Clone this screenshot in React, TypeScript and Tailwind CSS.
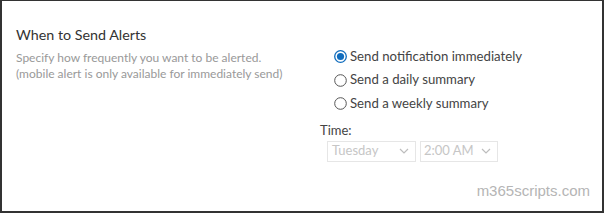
import React from "react";

function Radio({ checked, label }: { checked?: boolean; label: string }) {
  return (
    <div className="flex items-center h-[23.5px]">
      {checked ? (
        <svg width="13" height="13" viewBox="0 0 13 13" className="shrink-0">
          <circle cx="6.5" cy="6.5" r="5.8" fill="white" stroke="#0f6cbd" strokeWidth="1.3" />
          <circle cx="6.5" cy="6.5" r="3.6" fill="#0f6cbd" />
        </svg>
      ) : (
        <svg width="13" height="13" viewBox="0 0 13 13" className="shrink-0">
          <circle cx="6.5" cy="6.5" r="5.8" fill="white" stroke="#555" strokeWidth="1" />
        </svg>
      )}
      <span className="ml-[3px] text-[13.2px] text-[#444] whitespace-nowrap">{label}</span>
    </div>
  );
}

function Chevron() {
  return (
    <svg width="10" height="6" viewBox="0 0 10 6">
      <path d="M1 1l4 4 4-4" fill="none" stroke="#bdbdbd" strokeWidth="1.2" />
    </svg>
  );
}

export default function App() {
  return (
    <div
      className="relative w-[604px] h-[213px] bg-white border-l-2 border-t border-r-2 border-b-2 border-[#333] box-border"
      style={{ fontFamily: 'Lato, "Noto Sans", sans-serif' }}
    >
      <div className="pl-[14px] pt-[25px] text-[14.3px] text-[#333] leading-[18px]">When to Send Alerts</div>
      <div className="flex mt-[6px]">
        <div className="w-[318px] pl-[14px] text-[12px] leading-[16px] text-[#999] whitespace-nowrap">
          <div>Specify how frequently you want to be alerted.</div>
          <div>(mobile alert is only available for immediately send)</div>
        </div>
        <div className="-mt-[5px] flex flex-col">
          <div className="pl-[14px] flex flex-col">
            <Radio checked label="Send notification immediately" />
            <Radio label="Send a daily summary" />
            <Radio label="Send a weekly summary" />
          </div>
          <div className="mt-[6px] text-[13px] text-[#444] leading-[16px]">Time:</div>
          <div className="flex gap-[4px] ml-[7px] mt-[3px]">
            <div className="w-[89px] h-[21px] border border-[#e6e6e6] flex items-center justify-between pl-[4px] pr-[6px] text-[13px] text-[#c6c6c6]">
              <span>Tuesday</span>
              <Chevron />
            </div>
            <div className="w-[78px] h-[21px] border border-[#e6e6e6] flex items-center justify-between pl-[3px] pr-[6px] text-[13px] text-[#c6c6c6]">
              <span>2:00 AM</span>
              <Chevron />
            </div>
          </div>
        </div>
      </div>
      <div
        className="absolute right-[12px] bottom-[11px] text-[15px] text-[#b5b5b5] leading-[18px]"
        style={{ fontFamily: '"Liberation Sans", Arial, sans-serif' }}
      >
        m365scripts.com
      </div>
    </div>
  );
}
